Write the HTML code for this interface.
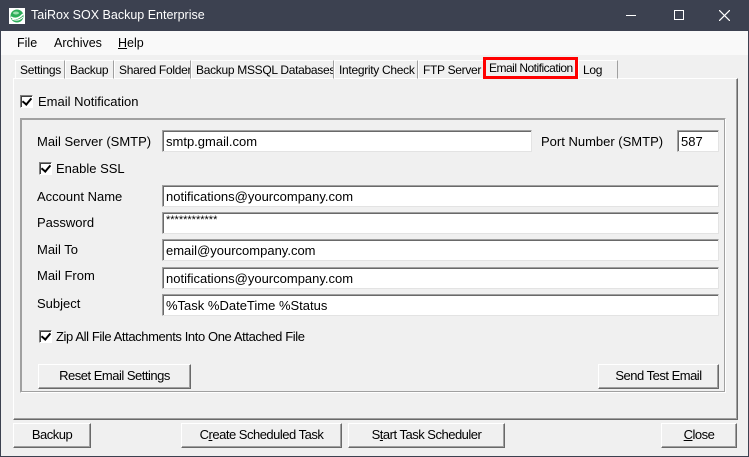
<!DOCTYPE html>
<html><head><style>
*{margin:0;padding:0;box-sizing:border-box}
body{width:749px;height:457px;overflow:hidden;background:#3c4150;font-family:"Liberation Sans",sans-serif;font-size:12px;color:#000;position:relative}
.a{position:absolute;white-space:nowrap}
#win{position:absolute;left:1px;top:31px;width:747px;height:425px;background:#f0f0f0}
.in{position:absolute;background:#fff;border:1px solid;border-color:#a0a0a0 #e3e3e3 #e3e3e3 #a0a0a0;box-shadow:inset 1px 1px 0 #696969;height:22px;padding:3px 0 0 3px;font-size:13px;white-space:nowrap}
.cb{position:absolute;width:13px;height:13px;background:#fff;border:1px solid;border-color:#808080 #fff #fff #808080;box-shadow:inset 1px 1px 0 #404040}
.cb:after{content:"";position:absolute;left:3px;top:0px;width:4px;height:7px;border:solid #000;border-width:0 2px 2px 0;transform:rotate(40deg)}
.btn{position:absolute;height:25px;background:#f0f0f0;border:1px solid;border-color:#fff #696969 #696969 #fff;box-shadow:inset -1px -1px 0 #a0a0a0;text-align:center;line-height:22px;font-size:13px;letter-spacing:-0.5px;white-space:nowrap}
.tab{position:absolute;top:60px;height:19px;border:1px solid;border-color:#fff #a0a0a0 transparent #fff;padding:2px 0 0 4px;font-size:12px;letter-spacing:-0.3px;white-space:nowrap;overflow:hidden}
.lab{position:absolute;font-size:13px;white-space:nowrap}
</style></head><body>
<svg class="a" style="left:9px;top:8px" width="16" height="16" viewBox="0 0 16 16"><rect width="16" height="16" fill="#fff"/><circle cx="8" cy="8" r="6.5" fill="#2eae5a"/><path d="M2 9 Q8 13 14 6" stroke="#fff" stroke-width="1.5" fill="none"/><path d="M3 11 Q9 14 14 9" stroke="#fff" stroke-width="1" fill="none"/><ellipse cx="7" cy="5" rx="3" ry="1.5" fill="#9de0b0"/></svg>
<div class="a" style="left:31px;top:8px;color:#fff;font-size:12.5px">TaiRox SOX Backup Enterprise</div>
<div class="a" style="left:626px;top:15px;width:10px;height:1px;background:#fff"></div>
<div class="a" style="left:674px;top:10px;width:10px;height:10px;border:1px solid #fff"></div>
<svg class="a" style="left:719px;top:10px" width="11" height="11"><path d="M0 0L11 11M11 0L0 11" stroke="#fff" stroke-width="1.2"/></svg>
<div id="win">
<div class="a" style="left:0;top:0;width:747px;height:24px;background:#f9f9f9"></div>
</div>
<div class="a" style="left:17px;top:36px;font-size:12.5px">File</div>
<div class="a" style="left:54px;top:36px;font-size:12.5px">Archives</div>
<div class="a" style="left:118px;top:36px;font-size:12.5px"><u>H</u>elp</div>
<div class="a" style="left:13px;top:78px;width:725px;height:342px;border:1px solid;border-color:#fff #696969 #696969 #fff;box-shadow:inset -1px -1px 0 #a0a0a0"></div>
<div class="tab" style="left:15px;width:50px">Settings</div>
<div class="tab" style="left:65px;width:49px">Backup</div>
<div class="tab" style="left:114px;width:77px">Shared Folder</div>
<div class="tab" style="left:191px;width:143px">Backup MSSQL Databases</div>
<div class="tab" style="left:334px;width:84px">Integrity Check</div>
<div class="tab" style="left:418px;width:66px">FTP Server</div>
<div class="tab" style="left:483px;top:57px;height:22px;width:95px;background:#f0f0f0;border:3px solid #f00;padding:1px 0 0 3px;letter-spacing:-0.5px">Email Notification</div>
<div class="tab" style="left:578px;width:40px">Log</div>
<div class="cb" style="left:20px;top:95px"></div>
<div class="lab" style="left:38px;top:94px">Email Notification</div>
<div class="a" style="left:20px;top:118px;width:706px;height:275px;border:1px solid;border-color:#a0a0a0 #fff #fff #a0a0a0;box-shadow:1px 1px 0 #a0a0a0 inset,-1px -1px 0 #a0a0a0 inset"></div>
<div class="lab" style="left:37px;top:134px">Mail Server (SMTP)</div>
<div class="in" style="left:162px;top:130px;width:370px">smtp.gmail.com</div>
<div class="lab" style="left:541px;top:134px">Port Number (SMTP)</div>
<div class="in" style="left:677px;top:130px;width:42px">587</div>
<div class="cb" style="left:39px;top:162px"></div>
<div class="lab" style="left:56px;top:161px">Enable SSL</div>
<div class="lab" style="left:37px;top:189px">Account Name</div>
<div class="in" style="left:162px;top:185px;width:557px">notifications@yourcompany.com</div>
<div class="lab" style="left:37px;top:215px">Password</div>
<div class="in" style="left:162px;top:212px;width:557px;font-size:11px;padding-top:1px">************</div>
<div class="lab" style="left:37px;top:242px">Mail To</div>
<div class="in" style="left:162px;top:239px;width:557px">email@yourcompany.com</div>
<div class="lab" style="left:37px;top:268px">Mail From</div>
<div class="in" style="left:162px;top:267px;width:557px">notifications@yourcompany.com</div>
<div class="lab" style="left:37px;top:296px">Subject</div>
<div class="in" style="left:162px;top:294px;width:557px">%Task %DateTime %Status</div>
<div class="cb" style="left:39px;top:330px"></div>
<div class="lab" style="left:56px;top:329px;letter-spacing:-0.4px">Zip All File Attachments Into One Attached File</div>
<div class="btn" style="left:38px;top:364px;width:153px">Reset Email Settings</div>
<div class="btn" style="left:598px;top:364px;width:121px">Send Test Email</div>
<div class="btn" style="left:13px;top:423px;width:78px">Backup</div>
<div class="btn" style="left:181px;top:423px;width:161px">C<u>r</u>eate Scheduled Task</div>
<div class="btn" style="left:348px;top:423px;width:157px">S<u>t</u>art Task Scheduler</div>
<div class="btn" style="left:661px;top:423px;width:76px"><u>C</u>lose</div>
</body></html>
